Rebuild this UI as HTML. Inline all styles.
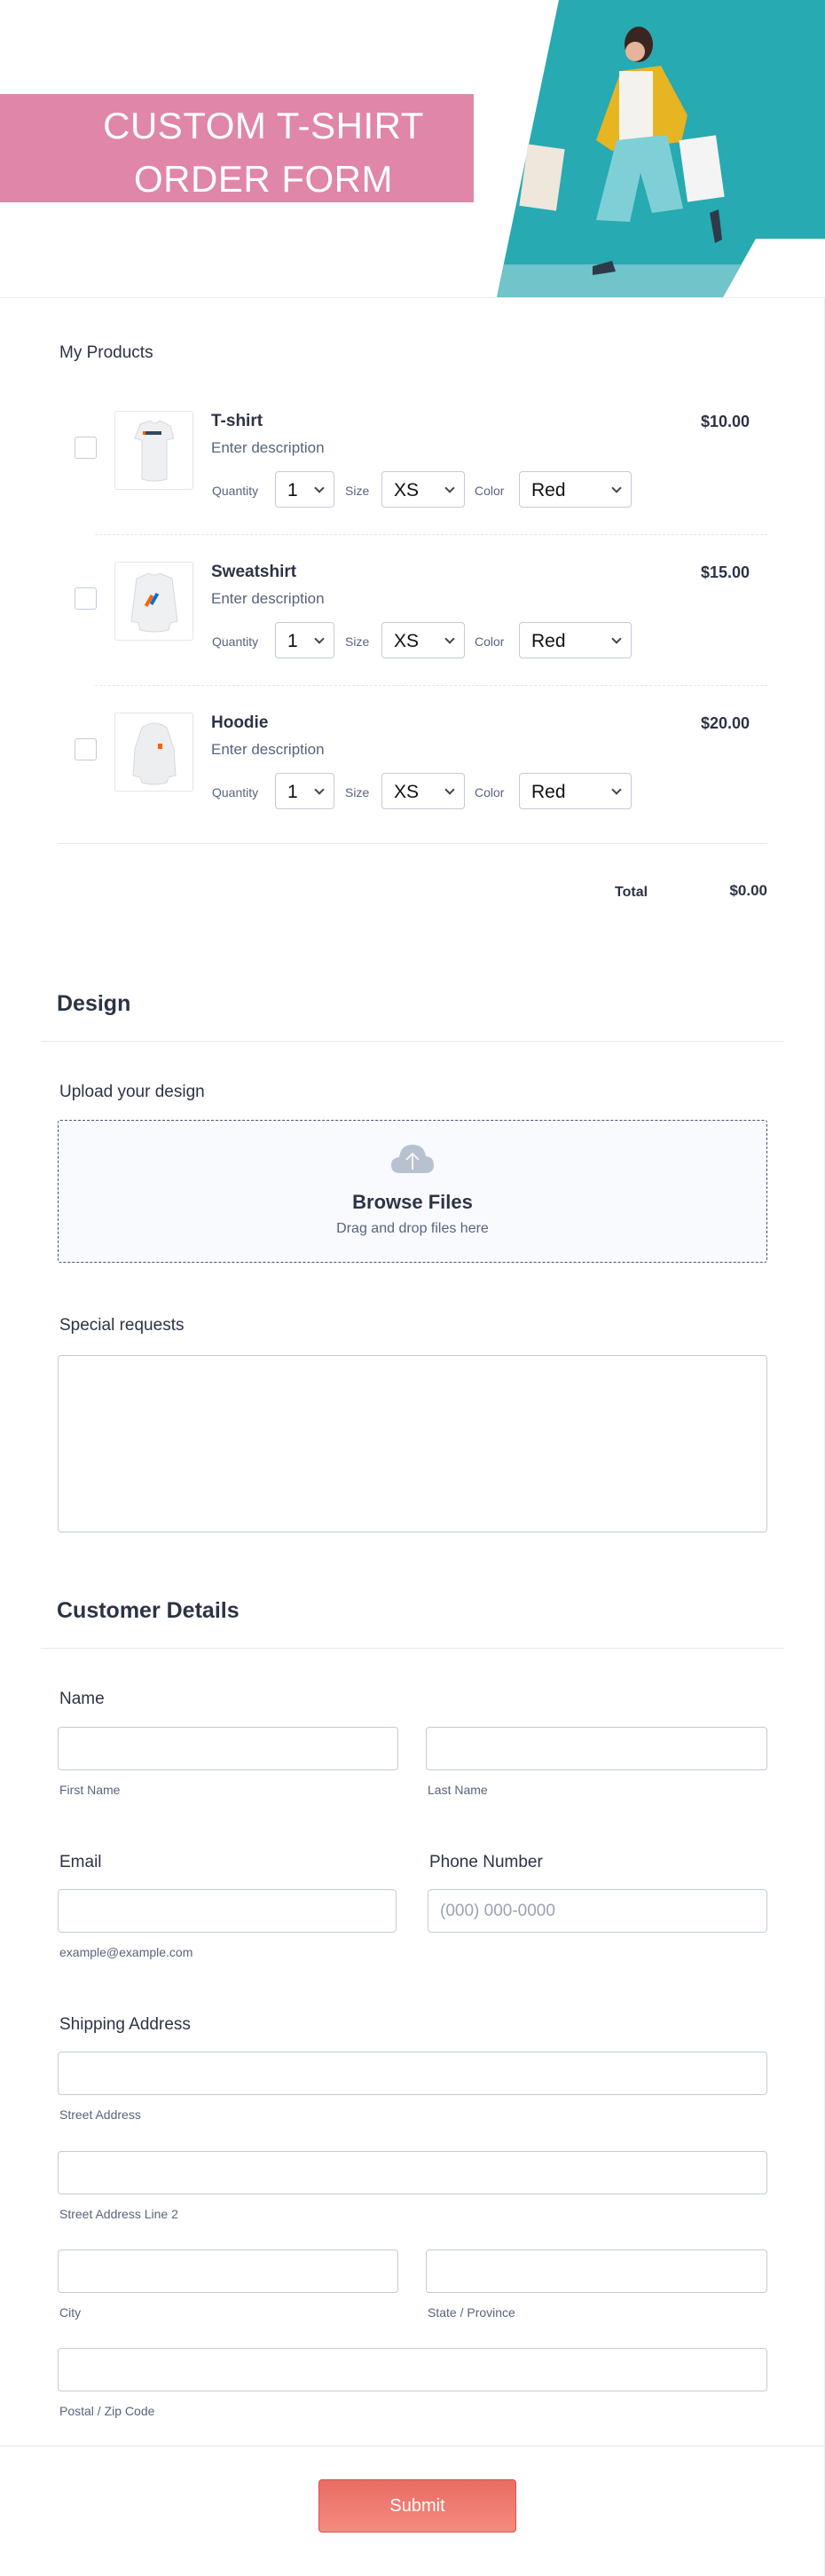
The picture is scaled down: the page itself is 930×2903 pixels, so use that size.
<!DOCTYPE html>
<html><head><meta charset="utf-8">
<style>
*{box-sizing:border-box;margin:0;padding:0}
body{width:930px;height:2903px;position:relative;background:#fff;font-family:"Liberation Sans",Arial,sans-serif;color:#2c3345;overflow:hidden}
.a{position:absolute;white-space:nowrap}
.lbl{font-size:19px;color:#2c3345}
.sub{font-size:14px;color:#57647e}
.inp{position:absolute;border:1px solid #c3cad8;border-radius:4px;background:#fff;height:49px}
.sel{position:absolute;border:1px solid #c3cad8;border-radius:4px;height:41px;font-size:21px;color:#111;padding:9px 0 0 13px}
.sel:after{content:"";position:absolute;right:12px;top:14px;width:6px;height:6px;border-right:2px solid #444;border-bottom:2px solid #444;transform:rotate(45deg)}
.sm{font-size:14px;color:#57647e}
.chk{position:absolute;width:25px;height:25px;border:1px solid #c3cad8;border-radius:3px}
.img{position:absolute;width:89px;height:89px;border:1px solid #e3e5ea;border-radius:3px;background:#fff}
.pn{font-size:19px;font-weight:bold;color:#2c3345}
.pd{font-size:17px;color:#57647e}
.pr{font-size:18px;font-weight:bold;color:#2c3345}
.hline{position:absolute;height:1px;background:#e6e8ed}
</style></head><body>
<!-- header -->
<div class="a" style="left:0;top:106px;width:534px;height:122px;background:#e086a8"></div>
<div class="a" style="left:0;top:112px;width:594px;text-align:center;color:#fff;font-size:42px;line-height:60px;font-weight:normal;letter-spacing:0.5px">CUSTOM T-SHIRT<br>ORDER FORM</div>
<svg class="a" style="left:0;top:0" width="930" height="336">
<polygon points="630,0 930,0 930,269 852,269 815,335 560,335" fill="#27aab1"/>
<polygon points="568,298 836,298 815,335 560,335" fill="#70c4ca"/>
<!-- person -->
<ellipse cx="720" cy="50" rx="16" ry="20" fill="#3a2521"/>
<circle cx="716" cy="58" r="11" fill="#e6b49a"/>
<path d="M700 80 L745 74 L775 130 L768 160 L690 170 L672 158 Z" fill="#e7b422"/>
<rect x="698" y="80" width="38" height="80" fill="#f3f2ee"/>
<path d="M695 158 L752 152 L770 235 L735 240 L722 195 L710 250 L672 248 Z" fill="#7fd0d6"/>
<rect x="590" y="165" width="42" height="70" fill="#efe6dc" transform="rotate(8 611 200)"/>
<rect x="770" y="155" width="42" height="70" fill="#f4f4f4" transform="rotate(-8 791 190)"/>
<path d="M668 300 L690 294 L694 306 L668 310 Z" fill="#2e3a4a"/>
<path d="M800 240 L810 236 L814 270 L806 274 Z" fill="#2e3a4a"/>
</svg>
<div class="hline" style="left:0;top:335px;width:930px;background:#eceef2"></div>
<div class="a" style="left:929px;top:336px;width:1px;height:2567px;background:#eceef2"></div>

<div class="a lbl" style="left:67px;top:387px">My Products</div>

<!-- product rows -->
<div class="chk" style="left:84px;top:492px"></div>
<div class="img" style="left:129px;top:463px"><svg width="87" height="87"><path d="M28 14 L40 10 Q44 16 50 10 L62 16 L66 30 L58 32 L58 76 Q44 80 30 76 L30 32 L22 30 Z" fill="#eef0f2" stroke="#d5d8de"/><rect x="34" y="22" width="18" height="4" fill="#34495e"/><rect x="31" y="22" width="3" height="4" fill="#ff6100"/></svg></div>
<div class="a pn" style="left:238px;top:464px">T-shirt</div>
<div class="a pd" style="left:238px;top:495px">Enter description</div>
<div class="a sm" style="left:239px;top:545px">Quantity</div>
<div class="sel" style="left:310px;top:531px;width:67px">1</div>
<div class="a sm" style="left:389px;top:545px">Size</div>
<div class="sel" style="left:430px;top:531px;width:94px">XS</div>
<div class="a sm" style="left:535px;top:545px">Color</div>
<div class="sel" style="left:585px;top:531px;width:127px">Red</div>
<div class="a pr" style="right:85px;top:465px">$10.00</div>
<div class="a" style="left:107px;top:602px;width:758px;border-top:1px dashed #e6e8ed"></div>

<div class="chk" style="left:84px;top:662px"></div>
<div class="img" style="left:129px;top:633px"><svg width="87" height="87"><path d="M24 18 L38 12 Q44 16 50 12 L64 18 L70 66 L62 68 L60 76 Q44 80 28 76 L26 68 L18 66 Z" fill="#eef0f2" stroke="#d5d8de"/><rect x="36" y="36" width="4" height="14" fill="#ff6100" transform="rotate(30 38 43)"/><rect x="42" y="34" width="4" height="14" fill="#0a6ed1" transform="rotate(30 44 41)"/></svg></div>
<div class="a pn" style="left:238px;top:634px">Sweatshirt</div>
<div class="a pd" style="left:238px;top:665px">Enter description</div>
<div class="a sm" style="left:239px;top:715px">Quantity</div>
<div class="sel" style="left:310px;top:701px;width:67px">1</div>
<div class="a sm" style="left:389px;top:715px">Size</div>
<div class="sel" style="left:430px;top:701px;width:94px">XS</div>
<div class="a sm" style="left:535px;top:715px">Color</div>
<div class="sel" style="left:585px;top:701px;width:127px">Red</div>
<div class="a pr" style="right:85px;top:635px">$15.00</div>
<div class="a" style="left:107px;top:772px;width:758px;border-top:1px dashed #e6e8ed"></div>

<div class="chk" style="left:84px;top:832px"></div>
<div class="img" style="left:129px;top:803px"><svg width="87" height="87"><path d="M30 16 Q44 6 58 16 L66 40 L68 70 L60 72 L58 78 Q44 82 30 78 L28 72 L20 70 L22 40 Z" fill="#eceef0" stroke="#d5d8de"/><rect x="48" y="34" width="5" height="6" fill="#ff6100"/></svg></div>
<div class="a pn" style="left:238px;top:804px">Hoodie</div>
<div class="a pd" style="left:238px;top:835px">Enter description</div>
<div class="a sm" style="left:239px;top:885px">Quantity</div>
<div class="sel" style="left:310px;top:871px;width:67px">1</div>
<div class="a sm" style="left:389px;top:885px">Size</div>
<div class="sel" style="left:430px;top:871px;width:94px">XS</div>
<div class="a sm" style="left:535px;top:885px">Color</div>
<div class="sel" style="left:585px;top:871px;width:127px">Red</div>
<div class="a pr" style="right:85px;top:805px">$20.00</div>

<div class="hline" style="left:65px;top:950px;width:800px"></div>
<div class="a" style="left:693px;top:997px;font-size:16px;font-weight:bold">Total</div>
<div class="a" style="right:65px;top:994px;font-size:17px;font-weight:bold">$0.00</div>

<!-- Design -->
<div class="a" style="left:64px;top:1117px;font-size:25px;font-weight:bold;color:#2c3345">Design</div>
<div class="hline" style="left:46px;top:1173px;width:838px"></div>
<div class="a lbl" style="left:67px;top:1220px">Upload your design</div>
<div class="a" style="left:65px;top:1262px;width:800px;height:161px;border:1px dashed #4a5470;border-radius:3px;background:#f8fafd"></div>
<svg class="a" style="left:441px;top:1286px" width="48" height="38"><path d="M10 36 Q0 36 0 27 Q0 19 9 18 Q11 4 24 4 Q37 4 39 17 Q48 18 48 27 Q48 36 38 36 Z" fill="#b7c1cf"/><path d="M24 32 V14 M17 21 L24 14 L31 21" stroke="#f2f4f7" stroke-width="2" fill="none"/></svg>
<div class="a" style="left:65px;top:1342px;width:800px;text-align:center;font-size:22px;font-weight:bold;color:#2c3345">Browse Files</div>
<div class="a" style="left:65px;top:1376px;width:800px;text-align:center;font-size:16px;color:#57647e">Drag and drop files here</div>

<div class="a lbl" style="left:67px;top:1483px">Special requests</div>
<div class="inp" style="left:65px;top:1527px;width:800px;height:200px"></div>

<!-- Customer Details -->
<div class="a" style="left:64px;top:1801px;font-size:25px;font-weight:bold;color:#2c3345">Customer Details</div>
<div class="hline" style="left:46px;top:1857px;width:838px"></div>
<div class="a lbl" style="left:67px;top:1904px">Name</div>
<div class="inp" style="left:65px;top:1946px;width:384px"></div>
<div class="inp" style="left:480px;top:1946px;width:385px"></div>
<div class="a sub" style="left:67px;top:2009px">First Name</div>
<div class="a sub" style="left:482px;top:2009px">Last Name</div>

<div class="a lbl" style="left:67px;top:2088px">Email</div>
<div class="a lbl" style="left:484px;top:2088px">Phone Number</div>
<div class="inp" style="left:65px;top:2129px;width:382px"></div>
<div class="inp" style="left:482px;top:2129px;width:383px;font-size:19px;color:#9aa3b3;padding:13px 0 0 13px">(000) 000-0000</div>
<div class="a sub" style="left:67px;top:2192px">example@example.com</div>

<div class="a lbl" style="left:67px;top:2271px">Shipping Address</div>
<div class="inp" style="left:65px;top:2312px;width:800px"></div>
<div class="a sub" style="left:67px;top:2375px">Street Address</div>
<div class="inp" style="left:65px;top:2424px;width:800px"></div>
<div class="a sub" style="left:67px;top:2487px">Street Address Line 2</div>
<div class="inp" style="left:65px;top:2535px;width:384px"></div>
<div class="inp" style="left:480px;top:2535px;width:385px"></div>
<div class="a sub" style="left:67px;top:2598px">City</div>
<div class="a sub" style="left:482px;top:2598px">State / Province</div>
<div class="inp" style="left:65px;top:2646px;width:800px"></div>
<div class="a sub" style="left:67px;top:2709px">Postal / Zip Code</div>

<div class="hline" style="left:0;top:2756px;width:930px"></div>
<div class="a" style="left:359px;top:2794px;width:223px;height:60px;border:1px solid #d9534f;border-radius:4px;background:linear-gradient(#e96c63,#f58b80);color:#fff;font-size:20px;text-align:center;line-height:58px">Submit</div>
</body></html>
